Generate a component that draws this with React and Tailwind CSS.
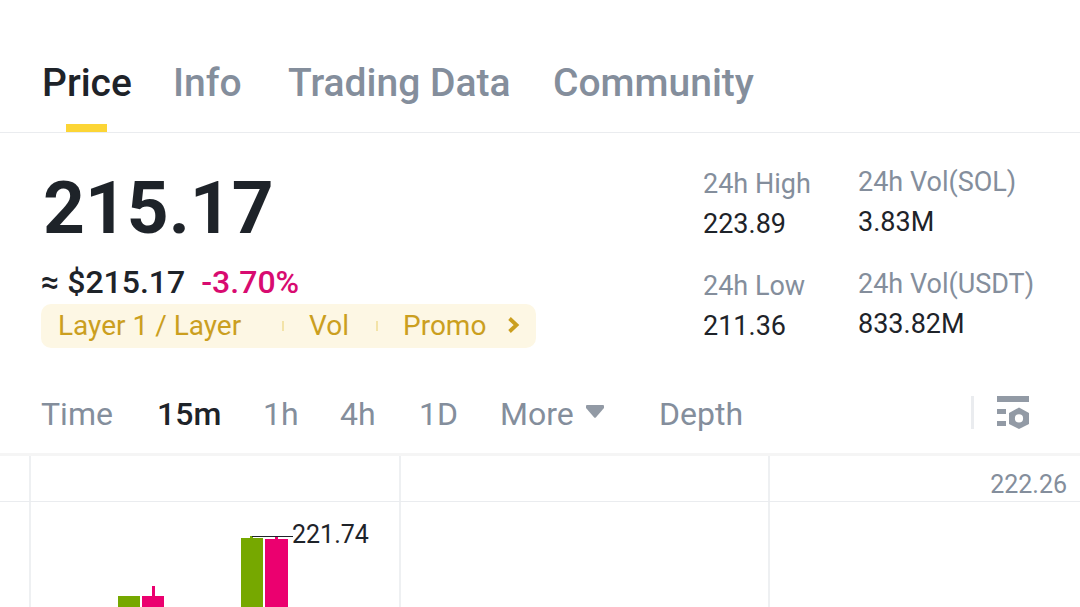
const tabs = ["Price", "Info", "Trading Data", "Community"];

const statColumns = [
  [
    { label: "24h High", value: "223.89" },
    { label: "24h Low", value: "211.36" },
  ],
  [
    { label: "24h Vol(SOL)", value: "3.83M" },
    { label: "24h Vol(USDT)", value: "833.82M" },
  ],
];

const intervals = ["Time", "15m", "1h", "4h", "1D"];

function Tabs() {
  return (
    <nav className="border-b border-[#eaecef] px-[42px] pt-[57px]">
      <ul className="grid grid-cols-[131px_115px_265px_auto] justify-start text-[39px] leading-[52px] font-medium">
        {tabs.map((tab, i) => (
          <li key={tab} className="flex justify-start">
            <a
              href={"#" + tab.toLowerCase().replace(" ", "-")}
              aria-current={i === 0 ? "page" : undefined}
              className={
                "flex flex-col items-center gap-[15px] whitespace-nowrap " +
                (i === 0 ? "text-[#1e2329]" : "text-[#848e9c]")
              }
            >
              {tab}
              <span className={"h-2 w-[41px] " + (i === 0 ? "bg-[#fcd535]" : "bg-transparent")} />
            </a>
          </li>
        ))}
      </ul>
    </nav>
  );
}

function TagDivider() {
  return <span className="h-[10px] w-[2px] bg-[#f3e3a8]" />;
}

function Tags() {
  return (
    <button
      type="button"
      className="grid h-11 w-[495px] grid-cols-[224px_27px_67px_27px_104px_auto] items-center rounded-[10px] bg-[#fdf7e4] pl-[17px] text-left text-[28px] leading-8 text-[#cb9f1f]"
    >
      <span>Layer 1 / Layer</span>
      <TagDivider />
      <span>Vol</span>
      <TagDivider />
      <span>Promo</span>
      <svg width="14" height="18" viewBox="0 0 14 18" fill="none" aria-hidden="true">
        <path d="M2.5 1.5 9.5 8l-7 6.5" stroke="currentColor" strokeWidth="3.8" />
      </svg>
    </button>
  );
}

function Summary() {
  return (
    <section className="flex justify-between px-[41px] pt-[29px]">
      <div>
        <h1 className="pl-0.5 text-[73px] leading-[92px] font-bold">215.17</h1>
        <p className="flex gap-4 pt-2 pb-0.5 text-[32px] leading-10 font-medium">
          <span>≈ $215.17</span>
          <span className="text-[#d80b70]">-3.70%</span>
        </p>
        <Tags />
      </div>
      <div className="grid grid-cols-[155px_181px] items-start text-[27px] leading-10">
        {statColumns.map((column, i) => (
          <dl key={column[0].label} className={"flex flex-col gap-[22px] " + (i === 0 ? "pt-0.5" : "")}>
            {column.map((stat) => (
              <div key={stat.label}>
                <dt className="whitespace-nowrap text-[#848e9c]">{stat.label}</dt>
                <dd>{stat.value}</dd>
              </div>
            ))}
          </dl>
        ))}
      </div>
    </section>
  );
}

function IntervalBar() {
  return (
    <div className="flex items-center justify-between border-b-[3px] border-[#f5f5f5] px-[41px] pt-[46px] pb-[19px] text-[32px] leading-10 text-[#848e9c]">
      <div className="grid grid-cols-[116px_106px_77px_79px_81px_159px_auto] text-left">
        {intervals.map((name) => (
          <button
            key={name}
            type="button"
            className={"text-left " + (name === "15m" ? "font-medium text-[#1e2329]" : "")}
          >
            {name}
          </button>
        ))}
        <button type="button" className="flex items-center gap-3">
          More
          <svg width="18" height="14" viewBox="0 0 18 14" className="mb-1" aria-hidden="true">
            <path d="M1 0h16q1 0 1 1v2L9.8 12.4q-.8.8-1.6 0L0 3V1q0-1 1-1Z" fill="#929aa5" />
          </svg>
        </button>
        <button type="button" className="text-left">Depth</button>
      </div>
      <div className="mb-1 flex items-center gap-[23px] pr-[9px]">
        <span className="h-[33px] w-[3px] bg-[#eaecef]" />
        <button type="button" aria-label="Chart settings">
          <svg width="33" height="33" viewBox="0 0 33 33" className="block" fill="#929aa5" aria-hidden="true">
            <path d="M0 0h32v6H0zM0 13h9v5H0zM0 25h9v5H0z" />
            <path
              fillRule="evenodd"
              d="M22 11.5 32 17v11l-10 5L12 28V17ZM22 18.3a4.1 4.1 0 1 0 0 8.2 4.1 4.1 0 0 0 0-8.2Z"
            />
          </svg>
        </button>
      </div>
    </div>
  );
}

function Chart() {
  return (
    <section className="relative">
      <svg className="block h-[151px] w-full" aria-label="Price chart">
        <g fill="#eaecef">
          <rect x="29" y="0" width="2" height="151" opacity=".8" />
          <rect x="399" y="0" width="2" height="151" opacity=".8" />
          <rect x="768" y="0" width="2" height="151" opacity=".8" />
          <rect x="0" y="45" width="100%" height="1" />
        </g>
        <g fill="#76a800">
          <rect x="118" y="140" width="22" height="11" />
          <rect x="241" y="82" width="22" height="69" />
          <rect x="250" y="80" width="3" height="3" />
        </g>
        <g fill="#eb006f">
          <rect x="142" y="140" width="22" height="11" />
          <rect x="152" y="130" width="3" height="11" />
          <rect x="265" y="83" width="23" height="68" />
          <rect x="275" y="80" width="3" height="4" />
        </g>
        <rect x="252" y="80" width="41" height="1" fill="#1e2329" />
      </svg>
      <span className="absolute top-[13px] right-[13px] text-[25px] leading-8 text-[#848e9c]">222.26</span>
      <span className="absolute top-[63px] left-[292px] text-[25px] leading-8">221.74</span>
    </section>
  );
}

export default function App() {
  return (
    <main className="overflow-hidden bg-white font-['Roboto',sans-serif] text-[#1e2329]">
      <Tabs />
      <Summary />
      <IntervalBar />
      <Chart />
    </main>
  );
}
